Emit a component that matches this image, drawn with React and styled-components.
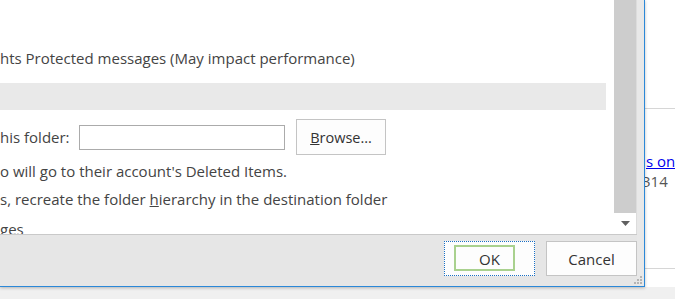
import styled, { createGlobalStyle } from 'styled-components'

const GlobalStyle = createGlobalStyle`
body {
    margin: 0;
    overflow: hidden;
    font-family: "Open Sans", "Noto Sans", sans-serif;
}
`

const Page = styled.div`
width: 675px;
height: 299px;
background-color: #f0f0f0;
display: flex;
flex-direction: column;
overflow: hidden;
`

const Top = styled.div`
display: flex;
height: 287px;
`

const Dialog = styled.div`
position: relative;
box-sizing: border-box;
width: 645px;
height: 287px;
display: flex;
flex-direction: column;
padding-right: 7px;
background-color: #e8e8e8;
border-right: 1px solid #2b88d8;
border-bottom: 1px solid #2b88d8;
box-shadow: 0 1px 3px rgba(0, 0, 0, 0.25);
`

const Body = styled.div`
display: flex;
height: 235px;
box-sizing: border-box;
border-bottom: 1px solid #c9c9c9;
`

const Content = styled.div`
flex: 1;
background-color: white;
padding-right: 8px;
overflow: hidden;
color: #444;
font-size: 15px;
white-space: nowrap;
`

const Line = styled.div`
height: ${props => props.h || 28}px;
margin-top: ${props => props.top || 0}px;
display: flex;
align-items: center;
`

const SectionBand = styled.div`
height: 27px;
margin-top: 15px;
background-color: #e9e9e9;
`

const FolderRow = styled.div`
display: flex;
align-items: center;
height: 36px;
margin-top: 9px;
`

const FolderLabel = styled.span`
width: 79px;
`

const PathInput = styled.div`
box-sizing: border-box;
width: 206px;
height: 25px;
border: 1px solid #ababab;
background-color: white;
`

const Button = styled.div`
position: relative;
box-sizing: border-box;
width: ${props => props.w || 91}px;
height: ${props => props.h || 35}px;
margin-left: ${props => props.ml || 0}px;
display: flex;
align-items: center;
justify-content: center;
background-color: #fdfdfd;
border: 1px ${props => props.focused ? 'dotted #1a6fc4' : 'solid #c4c4c4'};
color: #333;
font-size: ${props => props.fs || 15}px;
`

const Highlight = styled.div`
position: absolute;
left: 9px;
top: 3px;
width: 61px;
height: 26px;
box-sizing: border-box;
border: 2px solid #a9d18e;
`

const Scrollbar = styled.div`
width: 23px;
box-sizing: border-box;
border-right: 1px solid #dcdcdc;
display: flex;
flex-direction: column;
background-color: #f0f0f0;
`

const Thumb = styled.div`
flex: 1;
background-color: #cdcdcd;
`

const ArrowButton = styled.div`
height: 21px;
background-color: white;
display: flex;
align-items: center;
justify-content: center;
`

const ButtonBar = styled.div`
flex: 1;
display: flex;
justify-content: flex-end;
align-items: flex-start;
padding-top: 6px;
background-color: #e6e6e6;
`

const Grip = styled.svg`
position: absolute;
right: 2px;
bottom: 2px;
`

const Outer = styled.div`
flex: 1;
background-color: white;
overflow: hidden;
white-space: nowrap;
font-size: 15px;
`

const OuterTop = styled.div`
height: 108px;
border-bottom: 1px solid #d6d6d6;
`

const OuterLink = styled.div`
margin-top: 42px;
margin-left: 1px;
height: 20px;
line-height: 20px;
color: #0000ee;
text-decoration: underline;
`

const OuterMeta = styled.div`
margin-left: -3px;
height: 20px;
line-height: 20px;
color: #555;
`

const OuterRule = styled.div`
margin-top: 77px;
border-bottom: 1px solid #d6d6d6;
`

const BottomStrip = styled.div`
flex: 1;
background-color: #f0f0f0;
`

function App() {
    return (
        <Page>
            <GlobalStyle />
            <Top>
                <Dialog>
                    <Body>
                        <Content>
                            <Line top={48} h={20}>hts Protected messages (May impact performance)</Line>
                            <SectionBand />
                            <FolderRow>
                                <FolderLabel>his folder:</FolderLabel>
                                <PathInput />
                                <Button w={90} h={36} ml={11} fs={14.5}><span><u>B</u>rowse...</span></Button>
                            </FolderRow>
                            <Line top={2}>o will go to their account's Deleted Items.</Line>
                            <Line h={27}><span>s, recreate the folder <u>h</u>ierarchy in the destination folder</span></Line>
                            <Line h={34}>ges</Line>
                        </Content>
                        <Scrollbar>
                            <Thumb />
                            <ArrowButton>
                                <svg width="9" height="5" viewBox="0 0 9 5">
                                    <path d="M0 0 H9 L4.5 5 Z" fill="#606060" />
                                </svg>
                            </ArrowButton>
                        </Scrollbar>
                    </Body>
                    <ButtonBar>
                        <Button focused>
                            <Highlight />
                            OK
                        </Button>
                        <Button ml={11}>Cancel</Button>
                    </ButtonBar>
                    <Grip width="9" height="9" viewBox="0 0 9 9">
                        <g fill="#b4b4b4">
                            <rect x="7" y="1" width="2" height="2" />
                            <rect x="4" y="4" width="2" height="2" />
                            <rect x="7" y="4" width="2" height="2" />
                            <rect x="1" y="7" width="2" height="2" />
                            <rect x="4" y="7" width="2" height="2" />
                            <rect x="7" y="7" width="2" height="2" />
                        </g>
                    </Grip>
                </Dialog>
                <Outer>
                    <OuterTop />
                    <OuterLink>s on the</OuterLink>
                    <OuterMeta>314</OuterMeta>
                    <OuterRule />
                </Outer>
            </Top>
            <BottomStrip />
        </Page>
    )
}

export default App
